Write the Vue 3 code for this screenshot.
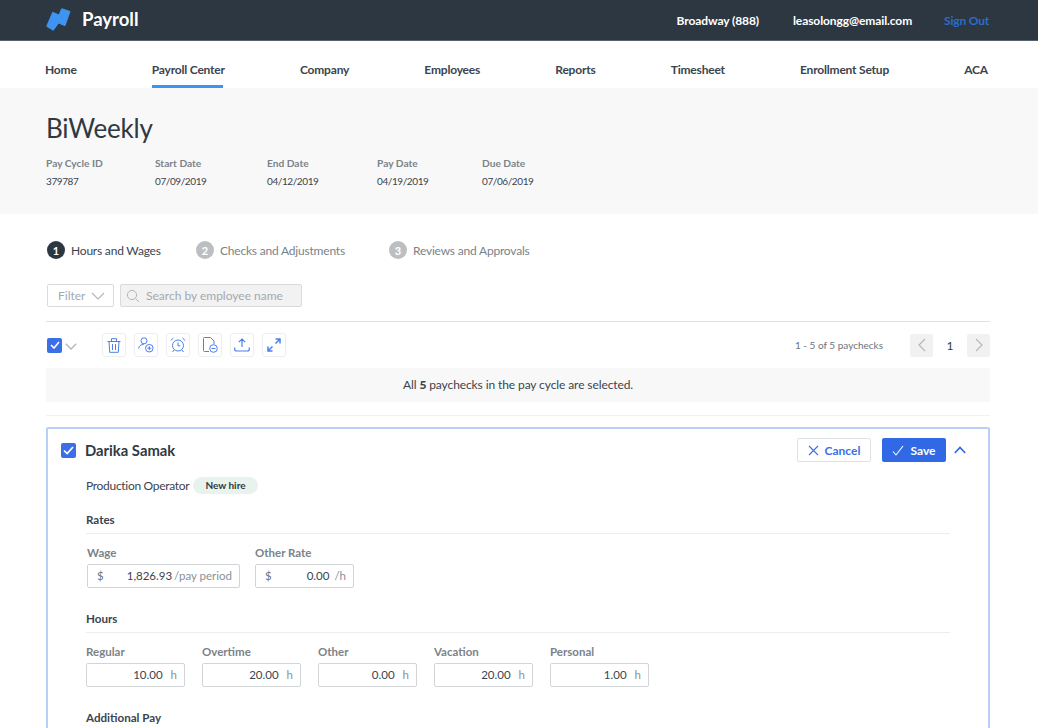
<script setup>
const nav = ['Home', 'Payroll Center', 'Company', 'Employees', 'Reports', 'Timesheet', 'Enrollment Setup', 'ACA']
const meta = [
  ['Pay Cycle ID', '379787', 109],
  ['Start Date', '07/09/2019', 112],
  ['End Date', '04/12/2019', 110],
  ['Pay Date', '04/19/2019', 105],
  ['Due Date', '07/06/2019', 80],
]
const steps = [
  ['1', 'Hours and Wages', true],
  ['2', 'Checks and Adjustments', false],
  ['3', 'Reviews and Approvals', false],
]
const hours = [
  ['Regular', '10.00'],
  ['Overtime', '20.00'],
  ['Other', '0.00'],
  ['Vacation', '20.00'],
  ['Personal', '1.00'],
]
</script>

<template>
  <div class="page">
    <header class="top">
      <svg class="logo" width="26" height="24" viewBox="0 0 26 24">
        <path fill="#3f93f2" stroke="#3f93f2" stroke-linejoin="round" d="M1.700 18.300 7.700 4.300 14 7 16.700.7 25 3.500 20 17.700 13.500 15 8.300 22.300Z" />
      </svg>
      <span class="brand">Payroll</span>
      <span class="spacer"></span>
      <span class="top-item first">Broadway (888)</span>
      <span class="top-item second">leasolongg@email.com</span>
      <span class="signout">Sign Out</span>
    </header>

    <nav class="nav">
      <a v-for="n in nav" :key="n" class="nav-item" :class="{ active: n === 'Payroll Center' }">{{ n }}</a>
    </nav>

    <section class="hero">
      <h1>BiWeekly</h1>
      <div class="meta">
        <div v-for="m in meta" :key="m[0]" class="meta-col" :style="{ width: m[2] + 'px' }">
          <div class="meta-label">{{ m[0] }}</div>
          <div class="meta-value">{{ m[1] }}</div>
        </div>
      </div>
    </section>

    <main class="main">
      <div class="steps">
        <div v-for="s in steps" :key="s[0]" class="step" :class="{ on: s[2] }">
          <span class="step-num">{{ s[0] }}</span>
          <span>{{ s[1] }}</span>
        </div>
      </div>

      <div class="filters">
        <div class="filter">
          Filter
          <svg width="14" height="8" viewBox="0 0 14 8"><path d="M1 1l6 6 6-6" fill="none" stroke="#b4b8bc" stroke-width="1.200" /></svg>
        </div>
        <div class="search">
          <svg width="14" height="14" viewBox="0 0 14 14"><circle cx="6" cy="6" r="4.600" fill="none" stroke="#b4b8bc" /><path d="M9.500 9.500l3.500 3.500" stroke="#b4b8bc" /></svg>
          <span>Search by employee name</span>
        </div>
      </div>

      <div class="toolbar">
        <span class="check small">
          <svg width="10" height="8" viewBox="0 0 10 8"><path d="M1 4l3 3 5-6" fill="none" stroke="#fff" stroke-width="1.600" /></svg>
        </span>
        <svg class="check-caret" width="12" height="7" viewBox="0 0 12 7"><path d="M.8.8 6 6l5.200-5.200" fill="none" stroke="#b9bdc1" stroke-width="1.600" /></svg>

        <div class="tools">
          <button class="tool" aria-label="Delete">
            <svg width="14" height="15" viewBox="0 0 14 15" fill="none" stroke="#4d7fec"><path d="M.5 3.500h13M4.500 3.500v-2.800h5v2.800M2 3.500l.7 10.800h8.600l.7-10.800M5.500 6v6M8.500 6v6" /></svg>
          </button>
          <button class="tool" aria-label="Add employee">
            <svg width="16" height="16" viewBox="0 0 16 16" fill="none" stroke="#4d7fec"><circle cx="6" cy="3.800" r="3" /><path d="M.7 11.500c0-2.500 2-4 5-4" /><circle cx="11.300" cy="11.200" r="3.800" /><path d="M11.300 9.200v4M9.300 11.200h4" /></svg>
          </button>
          <button class="tool" aria-label="Time">
            <svg width="16" height="16" viewBox="0 0 16 16" fill="none" stroke="#4d7fec"><circle cx="8" cy="8.500" r="5.500" /><path d="M8 5.500v3.300h2.300M.8 3.500 3.500 1M15.200 3.500 12.500 1M4 13l-1.500 2M12 13l1.500 2" /></svg>
          </button>
          <button class="tool" aria-label="Remove document">
            <svg width="16" height="16" viewBox="0 0 16 16" fill="none" stroke="#4d7fec"><path d="M7 14.500H2.500a1 1 0 0 1-1-1v-12a1 1 0 0 1 1-1h6l3.500 3.500v3" /><circle cx="11.500" cy="11.500" r="3.800" /><path d="M9.500 11.500h4" /></svg>
          </button>
          <button class="tool" aria-label="Upload">
            <svg width="16" height="14" viewBox="0 0 16 14" fill="none" stroke="#4d7fec" stroke-width="1.200"><path d="M8 9V1M4.800 4.200 8 1l3.200 3.200M.7 9.500v1.500a2 2 0 0 0 2 2h10.600a2 2 0 0 0 2-2V9.500" /></svg>
          </button>
          <button class="tool" aria-label="Expand">
            <svg width="14" height="14" viewBox="0 0 14 14" fill="none" stroke="#4d7fec" stroke-width="1.500"><path d="M8.500 5.500 13 1M8.500 1H13v4.500M5.500 8.500 1 13M1 8.500V13h4.500" /></svg>
          </button>
        </div>

        <span class="spacer"></span>
        <span class="count">1 - 5 of 5 paychecks</span>
        <button class="page-btn" aria-label="Previous">
          <svg width="8" height="14" viewBox="0 0 8 14"><path d="M7 1 1 7l6 6" fill="none" stroke="#b4b8bc" stroke-width="1.200" /></svg>
        </button>
        <span class="page-num">1</span>
        <button class="page-btn" aria-label="Next">
          <svg width="8" height="14" viewBox="0 0 8 14"><path d="m1 1 6 6-6 6" fill="none" stroke="#b4b8bc" stroke-width="1.200" /></svg>
        </button>
      </div>

      <div class="banner">All <b>5</b> paychecks in the pay cycle are selected.</div>
      <div class="thin-rule"></div>

      <article class="card">
        <div class="card-head">
          <span class="check large">
            <svg width="11" height="9" viewBox="0 0 11 9"><path d="M1 4.500l3.200 3 5.800-6.500" fill="none" stroke="#fff" stroke-width="1.700" /></svg>
          </span>
          <span class="name">Darika Samak</span>
          <span class="spacer"></span>
          <button class="btn-cancel">
            <svg width="11" height="11" viewBox="0 0 11 11"><path d="m1 1 9 9M10 1l-9 9" stroke="#3b6fe8" stroke-width="1.100" /></svg>
            Cancel
          </button>
          <button class="btn-save">
            <svg width="12" height="11" viewBox="0 0 12 11"><path d="m1 6.500 3 3.500 7-9" fill="none" stroke="#fff" stroke-width="1.100" /></svg>
            Save
          </button>
          <svg class="collapse" width="12" height="8" viewBox="0 0 12 8"><path d="M.8 7 6 1.500 11.200 7" fill="none" stroke="#2f66de" stroke-width="1.700" /></svg>
        </div>

        <div class="card-body">
          <div class="role">
            <span>Production Operator</span>
            <span class="tag">New hire</span>
          </div>

          <h3 class="sec rates">Rates</h3>
          <div class="row">
            <div class="field">
              <label>Wage</label>
              <div class="input wage">
                <span class="cur">$</span><span class="val">1,826.93</span><span class="unit">/pay period</span>
              </div>
            </div>
            <div class="field">
              <label>Other Rate</label>
              <div class="input other">
                <span class="cur">$</span><span class="val">0.00</span><span class="unit gap">/h</span>
              </div>
            </div>
          </div>

          <h3 class="sec hours">Hours</h3>
          <div class="row hours-row">
            <div v-for="h in hours" :key="h[0]" class="field">
              <label>{{ h[0] }}</label>
              <div class="input hour">
                <span class="val">{{ h[1] }}</span><span class="unit wide">h</span>
              </div>
            </div>
          </div>

          <h3 class="sec extra">Additional Pay</h3>
        </div>
      </article>
    </main>
  </div>
</template>

<style>
html, body { margin: 0; background: #fff; overflow: hidden; }
</style>

<style scoped>
.page { width: 1038px; height: 728px; overflow: hidden; font-family: Lato, "Open Sans", sans-serif; color: #2f3944; }
.spacer { flex: 1; }
.top { height: 40px; background: #2d3742; border-bottom: 1px solid #58616b; display: flex; align-items: center; padding: 0 49px 0 45px; font-size: 12px; letter-spacing: -0.1px; font-weight: 700; color: #fff; }
.logo { margin-right: 11px; }
.brand { font-size: 18.500px; font-weight: 700; letter-spacing: 0; margin-bottom: 2px; }
.first { margin-right: 34px; }
.second { margin-right: 32px; }
.signout { color: #2b6dc9; letter-spacing: -0.2px; }
.nav { height: 47px; display: flex; justify-content: space-between; padding: 0 50px 0 45px; font-size: 12px; letter-spacing: -0.2px; font-weight: 700; }
.nav-item { padding-top: 21px; height: 26px; line-height: 16px; position: relative; color: #3a444e; }
.active::after { content: ""; position: absolute; left: 0; right: 2px; bottom: 0; height: 3px; background: #3f93f2; }
.hero { height: 126px; box-sizing: border-box; background: #f8f8f8; padding: 23px 46px 0; }
h1 { margin: 0; font-size: 26px; letter-spacing: -0.2px; font-weight: 400; line-height: 34px; color: #2f3944; }
.meta { display: flex; margin-top: 11px; }
.meta-label { font-size: 10.200px; font-weight: 700; color: #7b8389; line-height: 14px; }
.meta-value { margin-top: 4px; font-size: 10px; letter-spacing: -0.4px; line-height: 14px; color: #3a444e; }
.main { padding: 0 48px 0 46px; }
.steps { display: flex; padding: 27px 0 0 1px; height: 18px; }
.step { display: flex; align-items: center; gap: 6px; font-size: 12px; letter-spacing: -0.2px; color: #7a8289; }
.step:nth-child(1) { width: 149px; }
.step:nth-child(2) { width: 193px; }
.step.on { color: #3a444e; }
.step-num { width: 18px; height: 18px; border-radius: 50%; background: #bcbfc2; color: #fff; font-size: 11px; font-weight: 700; letter-spacing: 0; display: flex; align-items: center; justify-content: center; }
.on .step-num { background: #2d3742; }
.filters { display: flex; gap: 6px; margin-top: 25px; height: 23px; padding: 0 0 14px 1px; border-bottom: 1px solid #dfe1e3; }
.filter { width: 67px; height: 23px; box-sizing: border-box; border: 1px solid #d8dadc; border-radius: 2px; display: flex; align-items: center; gap: 6px; padding-left: 10px; font-size: 12px; color: #a4a9ae; }
.search { width: 182px; height: 23px; box-sizing: border-box; border: 1px solid #d8dadc; border-radius: 2px; background: #f2f2f3; display: flex; align-items: center; gap: 6px; padding-left: 5px; font-size: 12px; color: #a4a9ae; }
.toolbar { display: flex; align-items: center; height: 46px; }
.check { background: #3b6fe8; border-radius: 2px; display: flex; align-items: center; justify-content: center; }
.check.small { width: 15px; height: 15px; margin-left: 1px; }
.check.large { width: 15px; height: 15px; }
.check-caret { margin-left: 3px; margin-top: 3px; }
.tools { display: flex; gap: 8px; margin-left: 25px; }
.tool { width: 24px; height: 24px; padding: 0; box-sizing: border-box; border: 1px solid #eceef0; border-radius: 3px; background: #fff; display: flex; align-items: center; justify-content: center; }
.count { font-size: 10px; color: #6b747c; margin-right: 27px; }
.page-btn { width: 23px; height: 23px; border: 0; padding: 0; background: #f1f1f2; border-radius: 2px; display: flex; align-items: center; justify-content: center; }
.page-num { width: 34px; text-align: center; font-size: 12px; }
.banner { height: 34px; line-height: 34px; background: #f8f8f8; text-align: center; font-size: 12px; letter-spacing: -0.1px; color: #3a444e; }
.banner b { font-weight: 900; }
.thin-rule { height: 1px; background: #f1f1f2; margin-top: 13px; }
.card { margin-top: 11px; height: 420px; box-sizing: border-box; border: 2px solid #b8cff8; border-radius: 2px; }
.card-head { display: flex; align-items: center; height: 42px; padding: 0 22px 0 13px; }
.card-head .name { margin-left: 9px; font-size: 14.800px; font-weight: 700; color: #2f3944; }
.btn-cancel, .btn-save { height: 24px; box-sizing: border-box; border-radius: 2px; font: 700 12px Lato, sans-serif; display: flex; align-items: center; justify-content: center; gap: 6px; padding: 0; }
.btn-cancel { width: 74px; background: #fff; border: 1px solid #dfe2e6; color: #3b6fe8; }
.btn-save { width: 64px; margin-left: 11px; background: #3168e6; border: 0; color: #fff; }
.collapse { margin-left: 8px; }
.card-body { padding: 0 38px; }
.role { display: flex; align-items: center; gap: 4px; height: 19px; font-size: 12px; letter-spacing: -0.3px; color: #3a444e; margin-top: 5px; }
.tag { height: 17px; line-height: 17px; padding: 0 12px; border-radius: 9px; background: #e9f3ee; font-size: 10px; letter-spacing: 0; font-weight: 700; color: #2f3944; }
.sec { margin: 0; font-size: 11.600px; font-weight: 700; line-height: 16px; color: #3a444e; }
.rates, .hours { padding-bottom: 5px; border-bottom: 1px solid #eceeef; }
.rates { margin-top: 17px; }
.hours { margin-top: 23px; }
.extra { margin-top: 23px; }
.row { display: flex; gap: 15px; margin: 12px 0 0 1px; }
.hours-row { gap: 17px; margin-left: 0; }
.field label { display: block; font-size: 11.500px; font-weight: 700; line-height: 14px; color: #7b8389; }
.input { height: 24px; box-sizing: border-box; margin-top: 4px; border: 1px solid #d2d5d8; border-radius: 2px; display: flex; align-items: center; padding: 0 7px 1px; font-size: 11.500px; color: #3a444e; }
.wage { width: 153px; }
.other { width: 99px; }
.hour { width: 99px; }
.cur { color: #6b747c; margin-left: 2px; }
.val { flex: 1; text-align: right; }
.unit { color: #8a9197; margin-left: 2px; font-size: 11.500px; }
.unit.gap { margin-left: 5px; }
.unit.wide { margin-left: 8px; }
</style>
